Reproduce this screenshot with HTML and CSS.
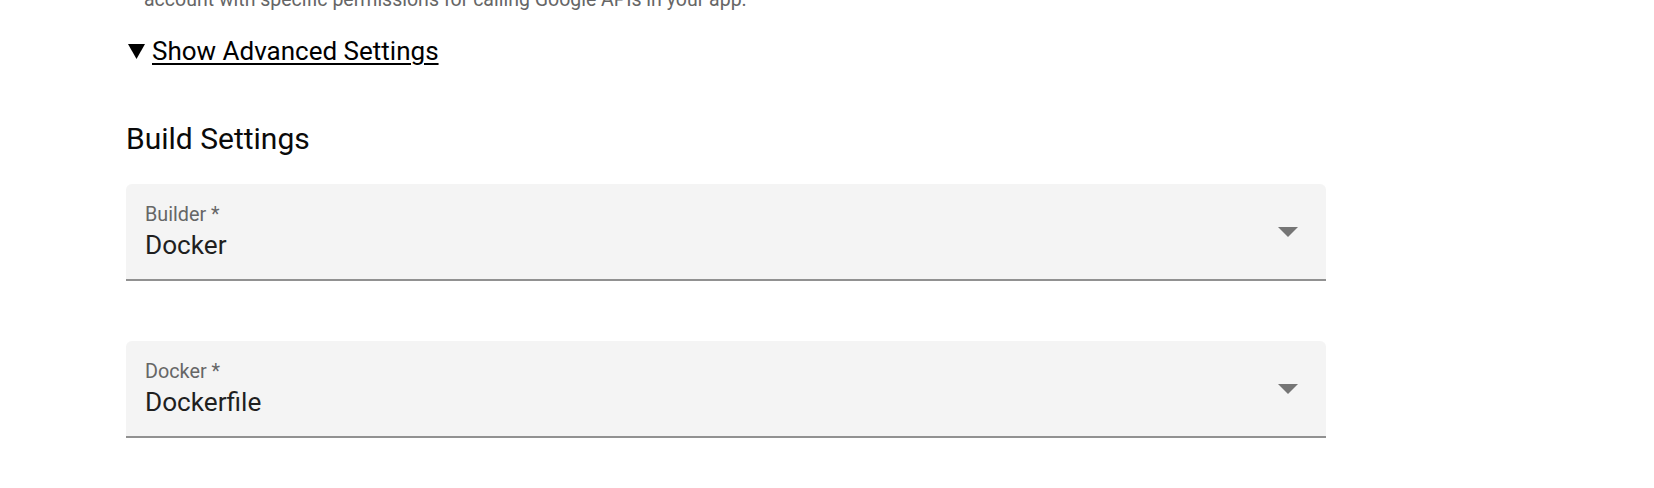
FILE: index.html
```html
<!DOCTYPE html>
<html lang="en">
<head>
<meta charset="utf-8">
<title>Build Settings</title>
<link rel="stylesheet" href="styles.css">
</head>
<body>
<div class="page">
  <p class="helper">account with specific permissions for calling Google APIs in your app.</p>
  <div class="advanced">
    <svg class="disclosure" width="17" height="15" viewBox="0 0 17 15" aria-hidden="true"><polygon points="0,0 17,0 8.5,15" fill="#000"/></svg><a class="advanced-link" href="#">Show Advanced Settings</a>
  </div>
  <h2 class="section-title">Build Settings</h2>
  <div class="fields">
    <div class="select">
      <div class="select-text">
        <div class="select-label">Builder *</div>
        <div class="select-value">Docker</div>
      </div>
      <svg class="select-arrow" width="20" height="10" viewBox="0 0 20 10" aria-hidden="true"><polygon points="0,0 20,0 10,10" fill="#757575"/></svg>
    </div>
    <div class="select">
      <div class="select-text">
        <div class="select-label">Docker *</div>
        <div class="select-value">Dockerfile</div>
      </div>
      <svg class="select-arrow" width="20" height="10" viewBox="0 0 20 10" aria-hidden="true"><polygon points="0,0 20,0 10,10" fill="#757575"/></svg>
    </div>
  </div>
</div>
</body>
</html>
```

FILE: styles.css
```css
html, body {
  margin: 0;
  padding: 0;
  background: #ffffff;
}

body {
  font-family: Roboto, "Liberation Sans", Arial, sans-serif;
  color: rgba(0, 0, 0, 0.87);
  overflow: hidden;
}

.page {
  display: flex;
  flex-direction: column;
  width: 1200px;
  margin-top: -12px;
  padding-left: 126px;
}

.helper {
  margin: 0 0 0 18px;
  font-size: 19.5px;
  line-height: 24px;
  color: #666666;
}

.advanced {
  margin: 21px 0 0 2px;
  font-size: 26px;
  line-height: 36px;
  color: #000000;
}

.disclosure {
  display: inline-block;
  vertical-align: 1px;
  margin-right: 7px;
}

.advanced-link {
  color: #000000;
  text-decoration: underline;
  text-decoration-thickness: 2px;
  text-underline-offset: 3px;
}

.section-title {
  margin: 50px 0 0 0;
  font-size: 30px;
  line-height: 40px;
  font-weight: 400;
  color: #0a0a0a;
}

.fields {
  display: flex;
  flex-direction: column;
  gap: 60px;
  margin-top: 25px;
}

.select {
  display: flex;
  align-items: center;
  height: 97px;
  box-sizing: border-box;
  background: #f4f4f4;
  border-radius: 6px 6px 0 0;
  border-bottom: 2px solid #919191;
}

.select-text {
  flex: 1;
  display: flex;
  flex-direction: column;
  align-self: flex-start;
  padding: 19px 19px 0 19px;
}

.select-label {
  font-size: 19.8px;
  line-height: 24px;
  color: #666666;
}

.select-value {
  margin-top: 3px;
  font-size: 26.2px;
  line-height: 30px;
  color: #1f1f1f;
}

.select-arrow {
  flex: none;
  margin-right: 28px;
}
```
